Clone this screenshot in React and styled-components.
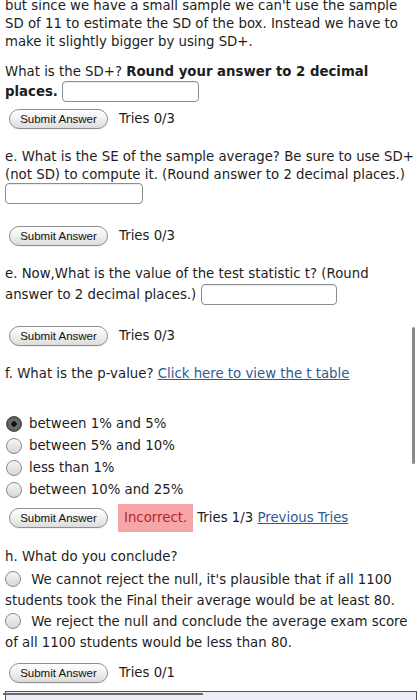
import React from "react";
import styled, { createGlobalStyle } from "styled-components";

const Global = createGlobalStyle`
  html, body { margin: 0; padding: 0; background: #fff; overflow: hidden; }
  body { font-family: "DejaVu Sans", Verdana, sans-serif; color: #1d1d1d; }
`;

const Page = styled.div`
  position: relative;
  width: 420px;
  height: 700px;
  overflow: hidden;
  padding: 0 0 0 5px;
  box-sizing: border-box;
  font-size: 13.3px;
  line-height: 18px;
`;

const Content = styled.div`
  margin-top: -3px;
  display: flex;
  flex-direction: column;
`;

const Para = styled.div`
  margin-top: ${(p) => p.$mt || 0}px;
  line-height: ${(p) => p.$lh || 18}px;
`;

const Bold = styled.b`
  font-weight: bold;
`;

const Input = styled.span`
  display: inline-block;
  box-sizing: border-box;
  width: ${(p) => p.$w || 136}px;
  height: 21px;
  border: 1px solid #8d8d8d;
  border-radius: 4px;
  background: #fff;
  vertical-align: middle;
  box-shadow: inset 0 1px 1px rgba(0, 0, 0, 0.08);
`;

const BlockInput = styled(Input)`
  display: block;
  margin-top: -1px;
`;

const SubmitRow = styled.div`
  display: flex;
  align-items: center;
  height: ${(p) => p.$h || 22}px;
  margin-top: ${(p) => p.$mt || 0}px;
  padding-left: 4px;
`;

const Button = styled.button`
  box-sizing: border-box;
  width: 99px;
  height: 20px;
  border: 1px solid #8e8e8e;
  border-radius: 10px;
  background: linear-gradient(#ffffff 0%, #f1f1f1 45%, #dcdcdc 100%);
  font-family: "Liberation Sans", Arial, sans-serif;
  font-size: 11.5px;
  color: #111;
  padding: 0;
  box-shadow: 0 1px 0 rgba(0, 0, 0, 0.05);
`;

const Tries = styled.span`
  margin-left: 11px;
`;

const Feedback = styled.span`
  display: inline-flex;
  align-items: center;
  height: 28px;
  margin-left: 10px;
  padding: 0 6px;
  background: #f7a6a8;
  color: #b4262d;
`;

const Link = styled.a`
  color: #2f5a93;
  text-decoration: underline;
`;

const TriesInline = styled.span`
  margin-left: 4px;
`;

const Options = styled.div`
  display: flex;
  flex-direction: column;
  margin-top: ${(p) => p.$mt || 0}px;
`;

const Option = styled.div`
  display: flex;
  align-items: center;
  height: 22px;
  gap: 7px;
  padding-left: 1px;
`;

const Radio = styled.span`
  display: inline-block;
  box-sizing: border-box;
  width: 16px;
  height: 16px;
  border-radius: 50%;
  border: 1px solid ${(p) => (p.$on ? "#444" : "#8a8a8a")};
  background: ${(p) =>
    p.$on
      ? "radial-gradient(circle, #111 0 2.5px, #777 3px, #6a6a6a 4.5px, #4a4a4a 100%)"
      : "linear-gradient(#f6f6f6, #d6d6d6)"};
  flex: none;
  vertical-align: -3px;
  margin-right: ${(p) => p.$mr || 0}px;
`;

const LongOpt = styled.div`
  line-height: 21px;
  margin-top: ${(p) => p.$mt || 0}px;
  padding-right: 6px;
`;

const Scrollbar = styled.div`
  position: absolute;
  left: 412px;
  top: 327px;
  width: 3px;
  height: 137px;
  border-radius: 2px;
  background: #8a8a8a;
`;

const BottomBox = styled.div`
  position: relative;
  margin: 7px 3px 0 0;
  height: 30px;
  border: 1px solid #555;
  background: #ededf7;
`;

const BoxLine = styled.div`
  position: absolute;
  left: -3px;
  top: 1px;
  width: 200px;
  height: 2px;
  background: #6a6a6a;
`;

export default function App() {
  return (
    <>
      <Global />
      <Page>
        <Content>
          <Para>
            but since we have a small sample we can't use the sample SD of 11 to
            estimate the SD of the box. Instead we have to make it slightly
            bigger by using SD+.
          </Para>
          <Para $mt={11} $lh={19}>
            What is the SD+? <Bold>Round your answer to 2 decimal places.</Bold>{" "}
            <Input $w={137} />
          </Para>
          <SubmitRow $mt={6}>
            <Button>Submit Answer</Button>
            <Tries>Tries 0/3</Tries>
          </SubmitRow>
          <Para $mt={18}>
            e. What is the SE of the sample average? Be sure to use SD+ (not SD)
            to compute it. (Round answer to 2 decimal places.)
            <BlockInput $w={138} />
          </Para>
          <SubmitRow $mt={21}>
            <Button>Submit Answer</Button>
            <Tries>Tries 0/3</Tries>
          </SubmitRow>
          <Para $mt={17} $lh={20}>
            e. Now,What is the value of the test statistic t? (Round answer to 2
            decimal places.) <Input $w={136} />
          </Para>
          <SubmitRow $mt={20}>
            <Button>Submit Answer</Button>
            <Tries>Tries 0/3</Tries>
          </SubmitRow>
          <Para $mt={18}>
            f. What is the p-value? <Link>Click here to view the t table</Link>
          </Para>
          <Options $mt={30}>
            <Option>
              <Radio $on />
              between 1% and 5%
            </Option>
            <Option>
              <Radio />
              between 5% and 10%
            </Option>
            <Option>
              <Radio />
              less than 1%
            </Option>
            <Option>
              <Radio />
              between 10% and 25%
            </Option>
          </Options>
          <SubmitRow $h={28} $mt={3}>
            <Button>Submit Answer</Button>
            <Feedback>Incorrect.</Feedback>
            <TriesInline>
              Tries 1/3 <Link>Previous Tries</Link>
            </TriesInline>
          </SubmitRow>
          <Para $mt={16}>h. What do you conclude?</Para>
          <LongOpt $mt={3}>
            <Radio $mr={6} /> We cannot reject the null, it's plausible that if
            all 1100 students took the Final their average would be at least 80.
          </LongOpt>
          <LongOpt>
            <Radio $mr={6} /> We reject the null and conclude the average exam
            score of all 1100 students would be less than 80.
          </LongOpt>
          <SubmitRow $mt={9}>
            <Button>Submit Answer</Button>
            <Tries>Tries 0/1</Tries>
          </SubmitRow>
          <BottomBox>
            <BoxLine />
          </BottomBox>
        </Content>
        <Scrollbar />
      </Page>
    </>
  );
}
